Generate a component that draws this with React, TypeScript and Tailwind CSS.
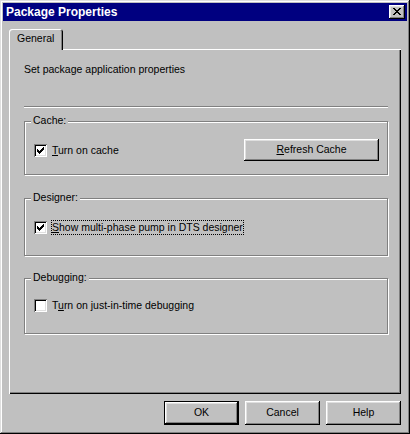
import React from "react";

const raised =
  "shadow-[inset_-1px_-1px_#000,inset_1px_1px_#fff,inset_-2px_-2px_#808080,inset_2px_2px_#dfdfdf]";

function Check({ checked }: { checked: boolean }) {
  return (
    <span className="flex h-[13px] w-[13px] shrink-0 items-center justify-center bg-white shadow-[inset_1px_1px_#808080,inset_-1px_-1px_#fff,inset_2px_2px_#000,inset_-2px_-2px_#dfdfdf]">
      {checked ? (
        <svg width="7" height="7" viewBox="0 0 7 7" shapeRendering="crispEdges">
          <path d="M0 2h1v3H0zM1 3h1v3H1zM2 4h1v3H2zM3 3h1v3H3zM4 2h1v3H4zM5 1h1v3H5zM6 0h1v3H6z" fill="#000" />
        </svg>
      ) : null}
    </span>
  );
}

function Group({ label, className, children }: { label: string; className: string; children: React.ReactNode }) {
  return (
    <div className={"border border-[#808080] shadow-[1px_1px_0_#fff,inset_1px_1px_0_#fff] " + className}>
      <div className="-mt-[8px] ml-[6px] w-fit bg-[#c0c0c0] px-[2px] leading-[13px]">{label}</div>
      {children}
    </div>
  );
}

export default function App() {
  return (
    <div className="flex h-[434px] w-[410px] flex-col bg-[#c0c0c0] p-[3px] font-['Liberation_Sans',Arial,sans-serif] text-[10.5px] text-black shadow-[inset_-1px_-1px_#000,inset_1px_1px_#dfdfdf,inset_-2px_-2px_#808080,inset_2px_2px_#fff]">
      {/* title bar */}
      <div className="flex h-[18px] items-center justify-between bg-[#000080] pl-[3px] pr-[2px]">
        <span className="text-[12px] font-bold leading-none text-white">Package Properties</span>
        <button className={"flex h-[14px] w-[16px] items-center justify-center bg-[#c0c0c0] pb-px " + raised}>
          <svg width="8" height="7" viewBox="0 0 8 7" shapeRendering="crispEdges">
            <path
              d="M0 0h2v1H0zM6 0h2v1H6zM1 1h2v1H1zM5 1h2v1H5zM2 2h4v1H2zM3 3h2v1H3zM2 4h4v1H2zM1 5h2v1H1zM5 5h2v1H5zM0 6h2v1H0zM6 6h2v1H6z"
              fill="#000"
            />
          </svg>
        </button>
      </div>

      <div className="mt-[8px] flex flex-col px-[6px]">
        {/* tab strip */}
        <div className="flex">
          <div className="relative z-10 -mb-px flex h-[21px] w-[54px] items-center rounded-t-[3px] bg-[#c0c0c0] pb-[1px] pl-[8px] shadow-[inset_1px_1px_#fff,inset_-1px_0_#000,inset_-2px_0_#808080]">
            General
          </div>
        </div>

        {/* tab panel */}
        <div className="flex h-[345px] flex-col pl-[15px] pr-[13px] pt-[14px] shadow-[inset_1px_1px_#fff,inset_-1px_-1px_#000,inset_-2px_-2px_#808080]">
          <div className="leading-[13px]">Set package application properties</div>
          <div className="mt-[30px] h-[2px] border-t border-b border-t-[#808080] border-b-white" />

          <Group label="Cache:" className="mt-[13px] pb-[13px]">
            <div className="mt-[12px] flex h-[22px] items-center justify-between pl-[9px] pr-[8px]">
              <div className="flex items-center gap-[4px]">
                <Check checked />
                <span className="border border-transparent leading-[13px]">
                  <span className="underline">T</span>urn on cache
                </span>
              </div>
              <button className={"flex h-[22px] w-[135px] items-center justify-center bg-[#c0c0c0] " + raised}>
                <span>
                  <span className="underline">R</span>efresh Cache
                </span>
              </button>
            </div>
          </Group>

          <Group label="Designer:" className="mt-[23px] pb-[19px]">
            <div className="mt-[15px] flex h-[17px] items-center gap-[4px] pl-[9px]">
              <Check checked />
              <span className="border border-dotted border-black leading-[13px]">
                <span className="underline">S</span>how multi-phase pump in DTS designer
              </span>
            </div>
          </Group>

          <Group label="Debugging:" className="mt-[22px] pb-[19px]">
            <div className="mt-[13px] flex h-[17px] items-center gap-[4px] pl-[9px]">
              <Check checked={false} />
              <span className="border border-transparent leading-[13px]">
                T<span className="underline">u</span>rn on just-in-time debugging
              </span>
            </div>
          </Group>
        </div>

        {/* dialog buttons */}
        <div className="mt-[7px] flex justify-end gap-[6px]">
          <button className="h-[24px] w-[75px] border border-black">
            <span className={"flex h-full w-full items-center justify-center bg-[#c0c0c0] " + raised}>OK</span>
          </button>
          <button className={"flex h-[24px] w-[75px] items-center justify-center bg-[#c0c0c0] " + raised}>Cancel</button>
          <button className={"flex h-[24px] w-[75px] items-center justify-center bg-[#c0c0c0] " + raised}>Help</button>
        </div>
      </div>
    </div>
  );
}
